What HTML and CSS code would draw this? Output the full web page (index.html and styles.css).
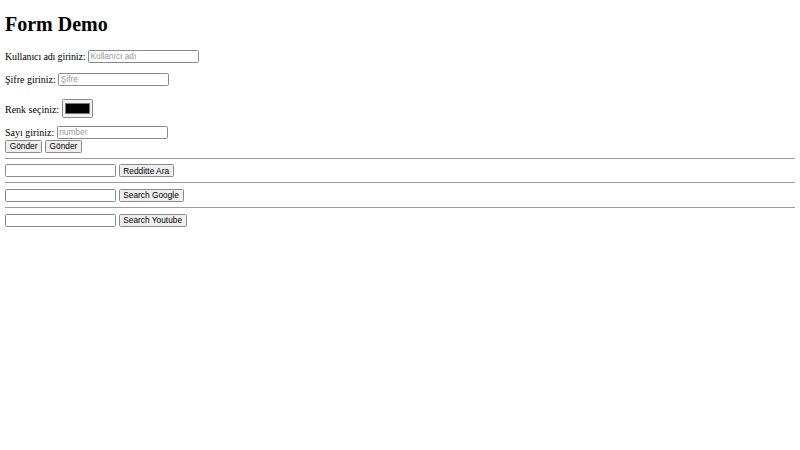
FILE: index.html
```html
<!DOCTYPE html>
<html>
<head>
<meta charset="utf-8">
<title>Form Demo</title>
<link rel="stylesheet" href="styles.css">
</head>
<body class="doc">
<h1 class="title">Form Demo</h1>
<form class="form">
<p class="row"><span class="tight">Kullanıcı adı giriniz:</span> <input class="field" type="text" placeholder="Kullanıcı adı"></p>
<p class="row">Şifre giriniz: <input class="field" type="password" placeholder="Şifre"></p>
<p class="row row-color">Renk seçiniz: <span class="color"><span class="swatch"></span></span></p>
Sayı giriniz: <input class="field" type="text" placeholder="number"><br>
<button class="btn btn-top" type="submit">Gönder</button>
<button class="btn btn-top" type="reset">Gönder</button>
</form>
<hr class="rule">
<form class="form"><input class="field" type="text"> <button class="btn" type="submit">Redditte Ara</button></form>
<hr class="rule">
<form class="form"><input class="field" type="text"> <button class="btn" type="submit">Search Google</button></form>
<hr class="rule">
<form class="form"><input class="field" type="text"> <button class="btn" type="submit">Search Youtube</button></form>
</body>
</html>
```
FILE: styles.css
```css
.doc {
  margin: 5px;
  font-family: "Liberation Serif", "Times New Roman", serif;
  font-size: 10px;
  background: #fff;
  color: #000;
}
.title {
  font-size: 20px;
  font-weight: bold;
  margin: 8.4px 0 13.4px;
}
.form {
  margin: 0;
}
.row {
  margin: 10px 0;
}
.row-color {
  margin: 13px 0 8px;
}
.tight {
  letter-spacing: -0.13px;
}
.field {
  box-sizing: border-box;
  width: 111px;
  height: 13px;
  padding: 0 1.5px;
  margin: 0;
  border: 1px solid #8a8a8a;
  border-radius: 1.5px;
  font-family: "Liberation Sans", Arial, sans-serif;
  font-size: 8.33px;
  vertical-align: baseline;
  background: #fff;
}
.field::placeholder {
  color: #999;
}
.color {
  display: inline-block;
  box-sizing: border-box;
  width: 31px;
  height: 19px;
  padding: 3px 2px;
  border: 1px solid #8a8a8a;
  border-radius: 1.5px;
  background: #efefef;
  vertical-align: -5px;
}
.swatch {
  display: block;
  height: 100%;
  background: #000;
  border: 0.5px solid #777;
  box-sizing: border-box;
}
.btn {
  box-sizing: border-box;
  height: 13px;
  padding: 0 3.75px;
  margin: 0;
  border: 1px solid #8a8a8a;
  border-radius: 1.5px;
  background: #efefef;
  font-family: "Liberation Sans", Arial, sans-serif;
  font-size: 8.33px;
  color: #000;
  line-height: 1;
}
.btn-top {
  margin-top: 1px;
}
.rule {
  border: 0;
  border-top: 1px solid #9a9a9a;
  margin: 5px 0 5.5px;
}
```
